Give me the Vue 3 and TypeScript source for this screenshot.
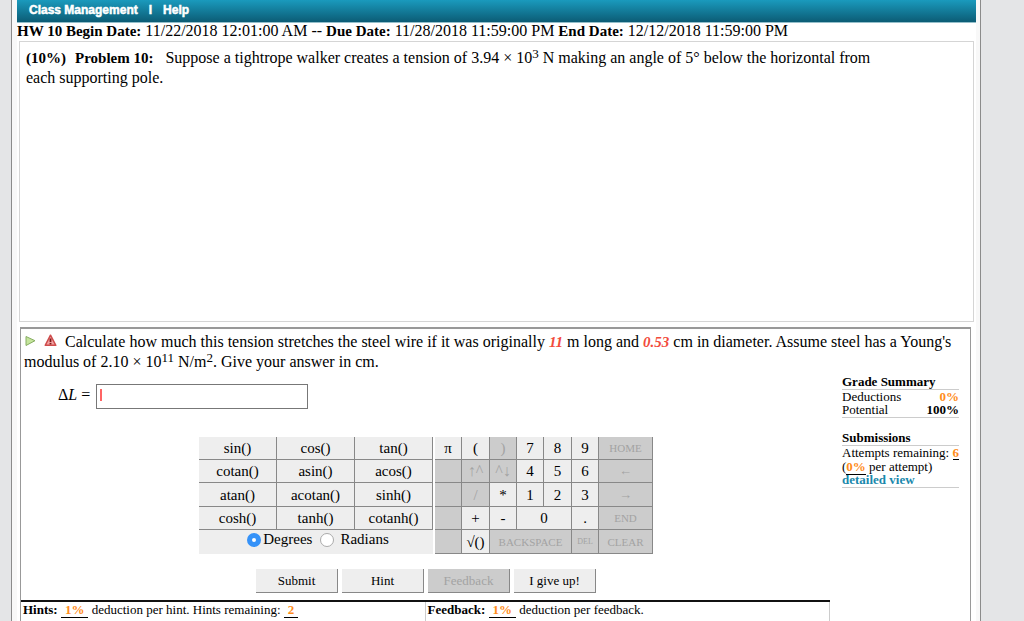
<script setup lang="ts">
import { ref } from 'vue'

interface Key {
  label: string
  off?: boolean
  span?: number
  kind?: 'small' | 'tiny' | 'arrow' | 'move'
}

const answer = ref('')
const angleUnit = ref('degrees')

const functionRows: string[][] = [
  ['sin()', 'cos()', 'tan()'],
  ['cotan()', 'asin()', 'acos()'],
  ['atan()', 'acotan()', 'sinh()'],
  ['cosh()', 'tanh()', 'cotanh()'],
]

const keyRows: Key[][] = [
  [{ label: 'π' }, { label: '(' }, { label: ')', off: true }, { label: '7' }, { label: '8' }, { label: '9' }, { label: 'HOME', off: true, kind: 'small' }],
  [{ label: '', off: true }, { label: '↑^', off: true, kind: 'arrow' }, { label: '^↓', off: true, kind: 'arrow' }, { label: '4' }, { label: '5' }, { label: '6' }, { label: '←', off: true, kind: 'move' }],
  [{ label: '', off: true }, { label: '/', off: true }, { label: '*' }, { label: '1' }, { label: '2' }, { label: '3' }, { label: '→', off: true, kind: 'move' }],
  [{ label: '', off: true }, { label: '+' }, { label: '-' }, { label: '0', span: 2 }, { label: '.' }, { label: 'END', off: true, kind: 'small' }],
  [{ label: '', off: true }, { label: '√()' }, { label: 'BACKSPACE', off: true, span: 3, kind: 'small' }, { label: 'DEL', off: true, kind: 'tiny' }, { label: 'CLEAR', off: true, kind: 'small' }],
]

const actions = [
  { label: 'Submit', off: false },
  { label: 'Hint', off: false },
  { label: 'Feedback', off: true },
  { label: 'I give up!', off: false },
]
</script>

<template>
  <div class="page">
    <nav class="menu">
      <a href="#">Class Management</a>
      <span class="divider">I</span>
      <a href="#">Help</a>
    </nav>

    <div class="dates">
      <b>HW 10 Begin Date:</b> 11/22/2018 12:01:00 AM -- <b>Due Date:</b> 11/28/2018 11:59:00 PM <b>End Date:</b> 12/12/2018 11:59:00 PM
    </div>

    <section class="problem">
      <p>
        <b class="weight">(10%)</b><b class="number">Problem 10:</b>Suppose a tightrope walker creates a tension of 3.94 × 10<sup>3</sup> N making an angle of 5° below the horizontal from each supporting pole.
      </p>
    </section>

    <section class="part">
      <p class="question">
        <svg class="play" viewBox="0 0 11 12" aria-hidden="true">
          <path d="M1 1.5 L10 5.7 L1 10.5 Z" fill="#c5e59c" stroke="#86ad62" stroke-linejoin="round" />
        </svg>
        <svg class="warning" viewBox="0 0 13 13" aria-hidden="true">
          <path d="M6.5 1.2 L11.8 11.3 H1.2 Z" fill="#f2a2a2" stroke="#cf4d4d" stroke-width="1.5" stroke-linejoin="round" />
          <path d="M6.5 4.5 V8" stroke="#7c1717" stroke-width="1.8" />
          <path d="M6.5 8.9 V10.4" stroke="#7c1717" stroke-width="1.8" />
        </svg>
        Calculate how much this tension stretches the steel wire if it was originally <em>11</em> m long and <em>0.53</em> cm in diameter. Assume steel has a Young's modulus of 2.10 × 10<sup>11</sup> N/m<sup>2</sup>. Give your answer in cm.
      </p>

      <div class="columns">
        <div class="work">
          <div class="answer">
            <label for="answer">Δ<i>L</i> =</label>
            <div class="field">
              <input id="answer" v-model="answer" type="text" />
              <span v-if="!answer" class="caret"></span>
            </div>
          </div>

          <div class="pads">
            <div class="functions">
              <template v-for="row in functionRows" :key="row[0]">
                <button v-for="name in row" :key="name" type="button">{{ name }}</button>
              </template>
              <div class="units">
                <label><input v-model="angleUnit" type="radio" name="unit" value="degrees" />Degrees</label>
                <label><input v-model="angleUnit" type="radio" name="unit" value="radians" /><span class="radians">Radians</span></label>
              </div>
            </div>
            <div class="keys">
              <template v-for="(row, r) in keyRows" :key="r">
                <button
                  v-for="(key, k) in row"
                  :key="k"
                  type="button"
                  :disabled="key.off"
                  :class="[key.kind, key.span ? 'span' + key.span : '']"
                >{{ key.label }}</button>
              </template>
            </div>
          </div>

          <div class="actions">
            <button v-for="a in actions" :key="a.label" type="button" :disabled="a.off">{{ a.label }}</button>
          </div>

          <div class="notes">
            <div class="note"><b>Hints:</b> <span class="score">1%</span> deduction per hint. Hints remaining: <span class="score">2</span></div>
            <div class="note"><b>Feedback:</b> <span class="score">1%</span> deduction per feedback.</div>
          </div>
        </div>

        <aside class="summary">
          <h2>Grade Summary</h2>
          <div class="block">
            <div class="line"><span>Deductions</span><b class="orange">0%</b></div>
            <div class="line"><span>Potential</span><b>100%</b></div>
          </div>
          <h2>Submissions</h2>
          <div class="block">
            <div class="line"><span>Attempts remaining:</span><b class="orange under">6</b></div>
            <div>(<b class="orange under">0%</b> per attempt)</div>
            <a href="#">detailed view</a>
          </div>
        </aside>
      </div>
    </section>
  </div>
</template>

<style>
html {
  background: #e4e5e7;
}
body {
  overflow: hidden;
}
</style>

<style scoped>
.page {
  box-sizing: border-box;
  height: 100vh;
  margin: 0 43px 0 11px;
  padding: 0 4px 0 5px;
  display: flex;
  flex-direction: column;
  overflow: hidden;
  background: linear-gradient(to right, #f8f8f8 5px, #fff 5px, #fff calc(100% - 4px), #f8f8f8 calc(100% - 4px));
  border: solid #8b8b8b;
  border-width: 0 1px;
  color: #000;
  font: 16px/20px "Liberation Serif", "Times New Roman", serif;
}
.menu {
  flex: none;
  display: flex;
  gap: 11px;
  box-sizing: border-box;
  height: 23px;
  padding-left: 12px;
  border-bottom: 1px solid #94bfca;
  background: linear-gradient(#1a9abd, #0c5c75);
  color: #fff;
  font: bold 12px/21px "Liberation Sans", Arial, sans-serif;
  -webkit-text-stroke: 0.5px #fff;
}
.menu a {
  color: #fff;
  text-decoration: none;
}
.dates {
  flex: none;
  height: 18px;
  line-height: 16px;
  white-space: nowrap;
}
.dates b,
.problem b {
  font-size: 15px;
}
.problem {
  flex: none;
  box-sizing: border-box;
  height: 281px;
  margin: 0 2px;
  padding: 6px 80px 0 6px;
  border: 1px solid #d5d5d5;
}
.problem p {
  margin: 0;
  line-height: 19px;
}
sup {
  font-size: 13px;
  line-height: 0;
  vertical-align: 5px;
}
.problem .weight {
  margin-right: 9px;
}
.problem .number {
  margin-right: 12px;
}
.part {
  flex: 1;
  margin: 5px 5px 0 3px;
  border: solid #999;
  border-width: 2px 1px 0;
}
.question {
  margin: 0;
  padding: 3px 12px 1px 3px;
  line-height: 20px;
}
.play {
  width: 11px;
  height: 12px;
  margin-left: 1px;
}
.warning {
  width: 13px;
  height: 13px;
  margin: 0 4px 0 8px;
}
em {
  color: #f24b3c;
  font-size: 15px;
  font-weight: bold;
}
.columns {
  display: flex;
  justify-content: space-between;
}
.work {
  width: 809px;
  padding-top: 11px;
}
.answer {
  display: flex;
  gap: 6px;
  padding-left: 37px;
  line-height: 22px;
}
.field {
  position: relative;
}
.field input {
  display: block;
  box-sizing: border-box;
  width: 212px;
  height: 25px;
  padding: 1px 4px;
  border: 1px solid #777;
  font: inherit;
}
.caret {
  position: absolute;
  left: 4px;
  top: 5px;
  width: 2px;
  height: 12px;
  background: #ff6464;
}
.pads {
  display: flex;
  gap: 2px;
  padding: 28px 0 0 178px;
}
.functions,
.keys {
  display: grid;
  grid-template-rows: 23px 23px 24px 23px 24px;
}
.functions {
  grid-template-columns: repeat(3, 78px);
}
.keys {
  grid-template-columns: 27px 28px 27px 27px 28px 27px 54px;
}
button {
  min-width: 0;
  margin: 0;
  padding: 0;
  overflow: hidden;
  border: solid #888;
  border-width: 0 1px 1px 0;
  border-radius: 0;
  background: #eee;
  color: #000;
  font: 15px/20px "Liberation Serif", "Times New Roman", serif;
  white-space: nowrap;
}
button:disabled {
  background: #ccc;
  color: #a3a3a3;
}
.small {
  font-size: 11px;
}
.tiny {
  font-size: 8px;
}
.move {
  font-size: 13px;
}
.arrow {
  font-size: 16px;
}
.span2 {
  grid-column: span 2;
}
.span3 {
  grid-column: span 3;
}
.units {
  grid-column: span 3;
  display: flex;
  justify-content: center;
  gap: 8px;
  background: #eee;
  padding-left: 4px;
}
.units label {
  display: flex;
  font-size: 15px;
  line-height: 18px;
}
.radians {
  padding-left: 4px;
}
.units input {
  appearance: none;
  box-sizing: border-box;
  width: 14px;
  height: 14px;
  margin: 3px 2px 0 0;
  border: 1px solid #aaa;
  border-radius: 50%;
  background: #fff;
}
.units input:checked {
  border: 5px solid #3592f8;
}
.actions {
  display: flex;
  gap: 4px;
  padding: 15px 0 7px 235px;
}
.actions button {
  box-sizing: border-box;
  width: 82px;
  height: 24px;
  font-size: 13px;
}
.notes {
  display: grid;
  grid-template-columns: 1fr 1fr;
  border-top: 2px solid #111;
}
.note {
  height: 22px;
  padding-left: 2px;
  border-right: 1px solid #ccc;
  font-size: 13px;
  line-height: 15px;
  white-space: nowrap;
}
.score {
  display: inline-block;
  padding: 0 4px;
  border-bottom: 1px solid #000;
  color: #ff8c1a;
  font-weight: bold;
}
.summary {
  width: 117px;
  padding: 2px 11px 0 0;
  font-size: 13px;
  line-height: 13px;
  white-space: nowrap;
}
.summary h2 {
  margin: 0;
  font-size: 13px;
  line-height: 14px;
}
.block {
  border: solid #ccc;
  border-width: 1px 0;
  padding-bottom: 1px;
  margin-bottom: 13px;
}
.line {
  display: flex;
  justify-content: space-between;
}
.orange {
  color: #ff8c1a;
}
.under {
  border-bottom: 1px solid #000;
}
.summary a {
  display: block;
  color: #1a88ac;
  font-weight: bold;
  text-decoration: none;
}
</style>
